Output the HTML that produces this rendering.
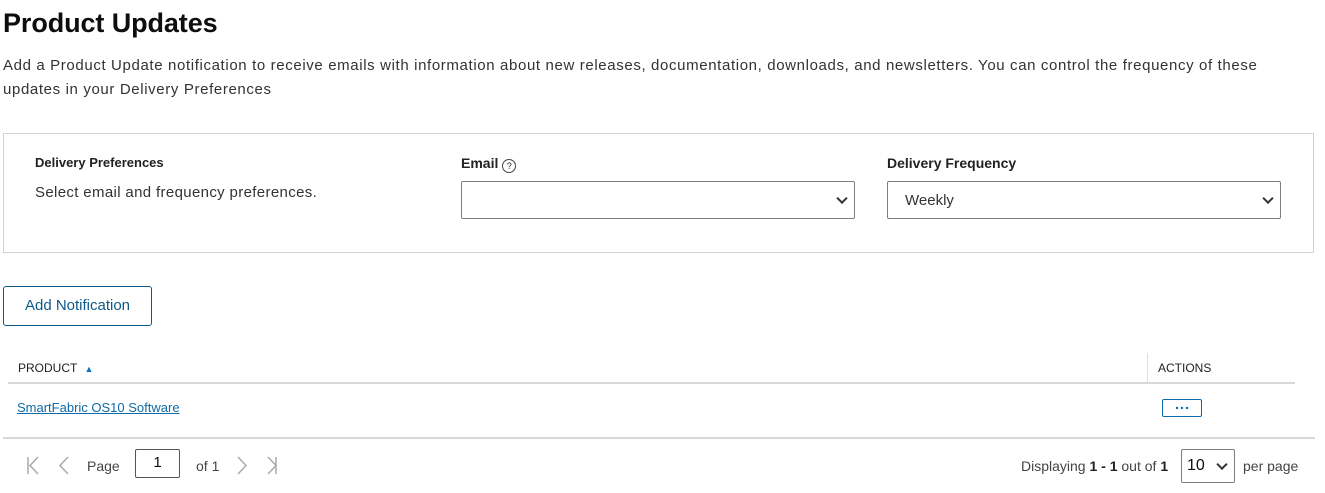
<!DOCTYPE html>
<html><head><style>
body{margin:0;width:1325px;height:493px;background:#fff;font-family:"Liberation Sans",sans-serif;color:#0e0e0e;position:relative;overflow:hidden}
.a{position:absolute;white-space:nowrap}
.sel{position:absolute;border:1px solid #7e7e7e;border-radius:2px;height:38px;box-sizing:border-box;background:#fff}
.chev{position:absolute;right:8px;top:50%;width:6px;height:6px;border-right:2px solid #333;border-bottom:2px solid #333;transform:translateY(-70%) rotate(45deg)}
</style></head><body>
<div class="a" style="left:3px;top:8px;font-size:27px;font-weight:bold;letter-spacing:-0.1px">Product Updates</div>
<div class="a" style="left:3px;top:54px;font-size:15px;line-height:24px;color:#333;white-space:normal;width:1285px;letter-spacing:0.63px">Add a Product Update notification to receive emails with information about new releases, documentation, downloads, and newsletters. You can control the frequency of these updates in your Delivery Preferences</div>
<div style="position:absolute;left:3px;top:133px;width:1311px;height:120px;border:1px solid #d2d2d2;box-sizing:border-box"></div>
<div class="a" style="left:35px;top:155px;font-size:13px;font-weight:bold;color:#222">Delivery Preferences</div>
<div class="a" style="left:35px;top:184px;font-size:15px;color:#333;letter-spacing:0.35px">Select email and frequency preferences.</div>
<div class="a" style="left:461px;top:155px;font-size:14px;font-weight:bold;color:#222">Email <span style="display:inline-block;width:12px;height:12px;border:1px solid #444;border-radius:50%;font-size:9px;text-align:center;line-height:12px;font-weight:normal;vertical-align:-1px">?</span></div>
<div class="sel" style="left:461px;top:181px;width:394px"><span class="chev"></span></div>
<div class="a" style="left:887px;top:155px;font-size:14px;font-weight:bold;color:#222">Delivery Frequency</div>
<div class="sel" style="left:887px;top:181px;width:394px"><span class="a" style="left:17px;top:10px;font-size:15px;color:#333">Weekly</span><span class="chev"></span></div>
<div class="a" style="left:3px;top:286px;width:149px;height:40px;box-sizing:border-box;border:1px solid #0e5a8a;border-radius:3px;color:#0e5a8a;font-size:15px;text-align:center;line-height:38px">Add Notification</div>
<div class="a" style="left:18px;top:361px;font-size:12px;color:#222">PRODUCT <span style="color:#0672cb;font-size:9px;margin-left:4px">▲</span></div>
<div style="position:absolute;left:1147px;top:353px;width:1px;height:30px;background:#e0e0e0"></div>
<div class="a" style="left:1158px;top:361px;font-size:12px;color:#222">ACTIONS</div>
<div style="position:absolute;left:8px;top:382px;width:1287px;height:2px;background:#d8d8d8"></div>
<div class="a" style="left:17px;top:400px;font-size:13px;color:#0e6aa8;text-decoration:underline">SmartFabric OS10 Software</div>
<div class="a" style="left:1162px;top:399px;width:40px;height:18px;box-sizing:border-box;border:1px solid #0e6aa8;border-radius:2px"><svg width="38" height="16" style="position:absolute;left:0;top:0"><circle cx="14" cy="8" r="1.2" fill="#0e6aa8"/><circle cx="19" cy="8" r="1.2" fill="#0e6aa8"/><circle cx="24" cy="8" r="1.2" fill="#0e6aa8"/></svg></div>
<div style="position:absolute;left:3px;top:437px;width:1312px;height:2px;background:#d8d8d8"></div>
<svg class="a" style="left:26px;top:456px" width="270" height="20" fill="none" stroke="#aaa" stroke-width="1.5"><path d="M2 1V18M12 1L4 9.5L12 18"/><path d="M42 1L34 9.5L42 18"/><path d="M212 1L220 9.5L212 18"/><path d="M242 1L250 9.5L242 18M250 1V18"/></svg>
<div class="a" style="left:87px;top:458px;font-size:14px;color:#444">Page</div>
<div class="a" style="left:135px;top:449px;width:45px;height:29px;box-sizing:border-box;border:1px solid #555;border-radius:2px;text-align:center;font-size:15px;line-height:26px">1</div>
<div class="a" style="left:196px;top:458px;font-size:14px;color:#444">of 1</div>
<div class="a" style="left:1021px;top:458px;font-size:14px;color:#444">Displaying <b style="color:#222">1 - 1</b> out of <b style="color:#222">1</b></div>
<div class="sel" style="left:1181px;top:449px;width:54px;height:34px"><span class="a" style="left:5px;top:7px;font-size:16px">10</span><span class="chev"></span></div>
<div class="a" style="left:1243px;top:458px;font-size:14px;color:#444">per page</div>
</body></html>
